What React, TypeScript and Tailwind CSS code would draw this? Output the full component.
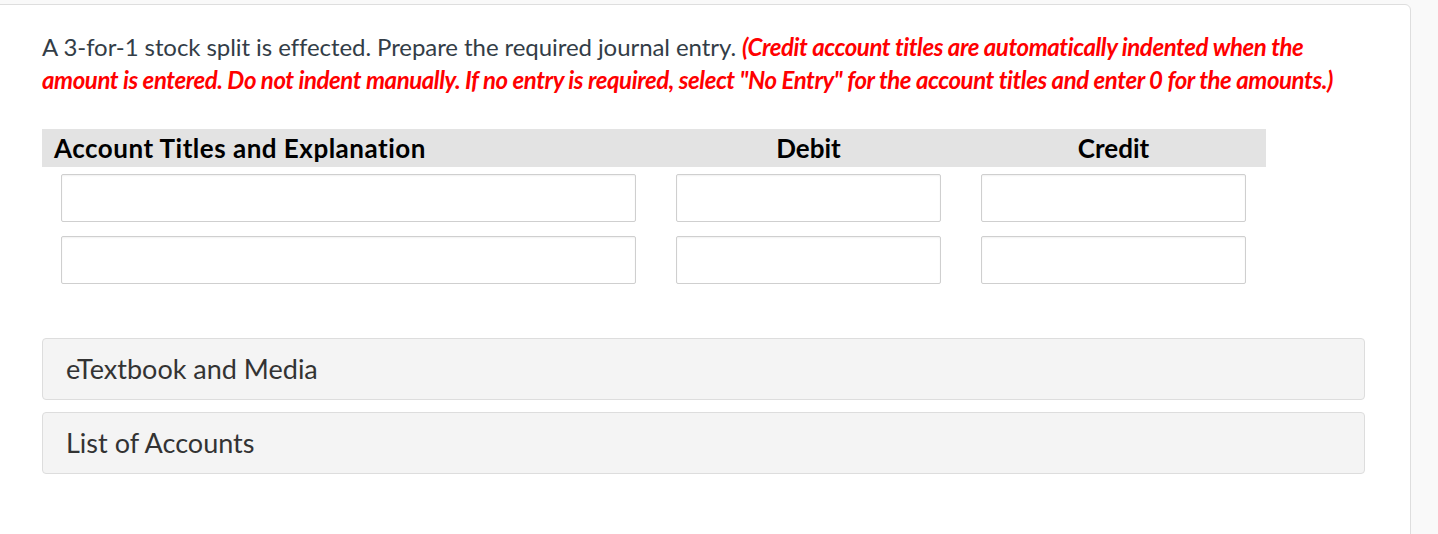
export default function App() {
  const rows = [0, 1];
  return (
    <div className="h-[534px] w-[1438px] overflow-hidden bg-[#f9f9f9] pt-[4px] font-['Lato',sans-serif]">
      <div className="-ml-[10px] h-[600px] w-[1421px] rounded-[6px] border border-[#dedede] bg-white pl-[51px] pt-[25px]">
        <p className="w-[1310px] text-[24px] leading-[33px] tracking-[-0.07px] text-[#333d47]">
          A 3-for-1 stock split is effected. Prepare the required journal entry.{' '}
          <span className="font-bold italic tracking-[-0.42px] text-[#ff0000]">
            (Credit account titles are automatically indented when the amount is entered. Do not indent manually. If no entry is required, select "No Entry" for the account titles and enter 0 for the amounts.)
          </span>
        </p>

        <div className="mt-[33px] w-[1224px]">
          <div className="grid h-[38px] grid-cols-[614px_305px_305px] items-center bg-[#e3e3e3] text-[26px] font-bold text-black">
            <div className="pl-[12px] tracking-[0.5px]">Account Titles and Explanation</div>
            <div className="text-center">Debit</div>
            <div className="text-center">Credit</div>
          </div>
          <div className="flex flex-col gap-[14px] pt-[7px]">
            {rows.map((r) => (
              <div key={r} className="grid grid-cols-[614px_305px_305px]">
                <div className="pl-[19px] pr-[20px]">
                  <input className="h-[48px] w-full rounded-[2px] border border-[#cfcfcf] bg-white shadow-[inset_0_1px_2px_rgba(0,0,0,0.06)] outline-none" />
                </div>
                <div className="px-[20px]">
                  <input className="h-[48px] w-full rounded-[2px] border border-[#cfcfcf] bg-white shadow-[inset_0_1px_2px_rgba(0,0,0,0.06)] outline-none" />
                </div>
                <div className="px-[20px]">
                  <input className="h-[48px] w-full rounded-[2px] border border-[#cfcfcf] bg-white shadow-[inset_0_1px_2px_rgba(0,0,0,0.06)] outline-none" />
                </div>
              </div>
            ))}
          </div>
        </div>

        <div className="mt-[54px] flex w-[1323px] flex-col gap-[12px]">
          {['eTextbook and Media', 'List of Accounts'].map((t) => (
            <div
              key={t}
              className="flex h-[62px] items-center rounded-[4px] border border-[#dddddd] bg-[#f4f4f4] pl-[23px] text-[27px] text-[#333333]"
            >
              {t}
            </div>
          ))}
        </div>
      </div>
    </div>
  );
}
